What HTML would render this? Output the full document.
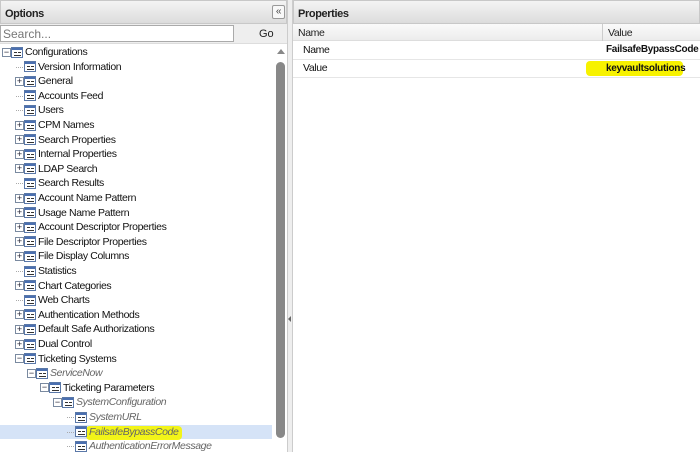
<!DOCTYPE html>
<html><head><style>
*{margin:0;padding:0;box-sizing:border-box}
body{width:700px;height:452px;overflow:hidden;background:#fff;font-family:"Liberation Sans",Arial,sans-serif;font-size:10.5px;letter-spacing:-0.38px;color:#111;position:relative}
.abs{position:absolute;white-space:nowrap}
.hdr{background:linear-gradient(#f4f4f4,#dcdcdc);border:1px solid #c8c8c8;font-weight:bold;font-size:11px;color:#222;padding:7px 0 0 4px;height:24px}
.row{position:absolute;height:14px;line-height:14px;white-space:nowrap}
.ic{position:absolute;width:12px;height:11px;border:1px solid #5a78a8;background:#fff}
.ic:before{content:"";position:absolute;left:0;top:0;right:0;height:2px;background:#4a6fb0}
.ic i{position:absolute;left:2px;height:1px;background:#333}
.ex{position:absolute;width:9px;height:9px;border:1px solid #7a8aa0;background:#fff;font-size:9px;line-height:7px;text-align:center;color:#223;letter-spacing:0}
.it{font-style:italic;color:#666}
</style></head><body>
<div class="abs hdr" style="left:0;top:0;width:287px">Options</div>
<div class="abs" style="left:272px;top:5px;width:13px;height:14px;border:1px solid #999;border-radius:2px;background:#f8f8f8;font-size:10px;line-height:11px;text-align:center;color:#444">«</div>
<div class="abs" style="left:0;top:24px;width:287px;height:20px;background:#eee;border-bottom:1px solid #ddd"></div>
<div class="abs" style="left:0;top:25px;width:234px;height:17px;border:1px solid #aaa;background:#fff;color:#777;font-size:12px;letter-spacing:0;padding:1px 2px">Search...</div>
<div class="abs" style="left:259px;top:28px;font-size:11px;color:#222;letter-spacing:0">Go</div>
<div class="abs" style="left:0;top:425px;width:272px;height:14px;background:#d5e3f7"></div>
<div class="abs" style="left:276px;top:62px;width:9px;height:376px;background:#888;border-radius:5px"></div>
<div class="abs" style="left:277px;top:49px;width:0;height:0;border-left:4px solid transparent;border-right:4px solid transparent;border-bottom:5px solid #888"></div>
<div class="abs" style="left:287px;top:0;width:6px;height:452px;background:#eee;border-left:1px solid #ccc;border-right:1px solid #ccc"></div>
<div class="abs" style="left:288px;top:316px;width:0;height:0;border-top:3px solid transparent;border-bottom:3px solid transparent;border-right:3px solid #666"></div>
<div class="abs" style="left:86px;top:426px;width:96px;height:14px;background:#f5f500;border-radius:4px;opacity:.9"></div>
<div id="tree"></div>
<div class="abs hdr" style="left:293px;top:0;width:407px">Properties</div>
<div class="abs" style="left:293px;top:24px;width:407px;height:17px;background:linear-gradient(#fafafa,#ececec);border-bottom:1px solid #ddd"></div>
<div class="abs" style="left:602px;top:24px;width:1px;height:17px;background:#ccc"></div>
<div class="abs" style="left:298px;top:27px;color:#222">Name</div>
<div class="abs" style="left:608px;top:27px;color:#222">Value</div>
<div class="abs" style="left:293px;top:59px;width:407px;height:1px;background:#e6e6e6"></div>
<div class="abs" style="left:293px;top:77px;width:407px;height:1px;background:#e6e6e6"></div>
<div class="abs" style="left:303px;top:44px">Name</div>
<div class="abs" style="left:606px;top:44px;font-weight:bold;font-size:10px;letter-spacing:-0.3px">FailsafeBypassCode</div>
<div class="abs" style="left:586px;top:61px;width:97px;height:15px;background:#f7f200;border-radius:4px"></div>
<div class="abs" style="left:303px;top:62px">Value</div>
<div class="abs" style="left:606px;top:63px;font-weight:bold;font-size:10px;letter-spacing:-0.3px">keyvaultsolutions</div>
<script>
var rows=[
[0,'-','Configurations'],[1,'','Version Information'],[1,'+','General'],[1,'','Accounts Feed'],[1,'','Users'],
[1,'+','CPM Names'],[1,'+','Search Properties'],[1,'+','Internal Properties'],[1,'+','LDAP Search'],[1,'','Search Results'],
[1,'+','Account Name Pattern'],[1,'+','Usage Name Pattern'],[1,'+','Account Descriptor Properties'],[1,'+','File Descriptor Properties'],
[1,'+','File Display Columns'],[1,'','Statistics'],[1,'+','Chart Categories'],[1,'','Web Charts'],[1,'+','Authentication Methods'],
[1,'+','Default Safe Authorizations'],[1,'+','Dual Control'],[1,'-','Ticketing Systems'],[2,'-','ServiceNow',1],
[3,'-','Ticketing Parameters'],[4,'-','SystemConfiguration',1],[5,'','SystemURL',1],[5,'','FailsafeBypassCode',1],[5,'','AuthenticationErrorMessage',1]];
var h='',base=[11,24,36,49,62,75];
rows.forEach(function(r,i){
 var y=45+i*14.6,ix=base[r[0]];
 if(r[1])h+='<div class="ex" style="left:'+(ix-9)+'px;top:'+(y+2.5)+'px">'+(r[1]=='-'?'−':'+')+'</div>';
 else h+='<div class="abs" style="left:'+(ix-8)+'px;top:'+(y+7)+'px;width:7px;border-top:1px dotted #aaa"></div>';
 h+='<div class="ic" style="left:'+ix+'px;top:'+(y+1.5)+'px"><i style="top:4px;width:3px"></i><i style="top:4px;left:6px;width:3px"></i><i style="top:7px;width:7px"></i></div>';
 h+='<div class="row'+(r[3]?' it':'')+'" style="left:'+(ix+14)+'px;top:'+y+'px">'+r[2]+'</div>';
});
document.getElementById('tree').innerHTML=h;
</script>
</body></html>
